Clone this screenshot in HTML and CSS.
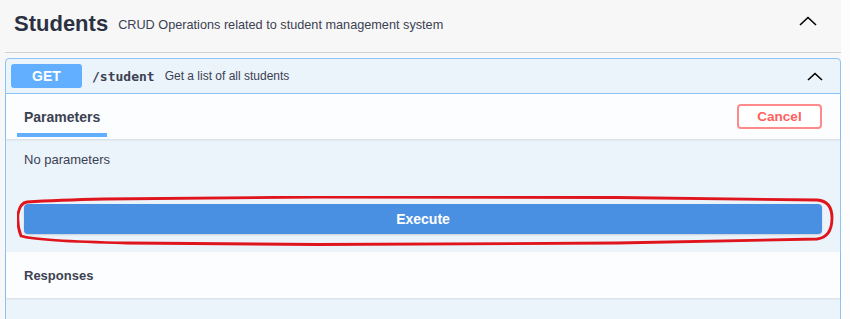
FILE: index.html
```html
<!DOCTYPE html>
<html>
<head>
<meta charset="utf-8">
<link rel="stylesheet" href="styles.css">
</head>
<body>
<div class="wrap">
  <div class="tag-header">
    <h3 class="tag-title">Students</h3>
    <span class="tag-desc">CRUD Operations related to student management system</span>
    <svg class="chev chev-top" width="18" height="10" viewBox="0 0 18 10"><polyline points="1,9 9,1.5 17,9" fill="none" stroke="#000" stroke-width="1.6"/></svg>
  </div>
  <div class="opblock">
    <div class="summary">
      <span class="method">GET</span>
      <span class="path">/student</span>
      <span class="summary-desc">Get a list of all students</span>
      <svg class="chev chev-op" width="16" height="9" viewBox="0 0 16 9"><polyline points="1,8 8,1.5 15,8" fill="none" stroke="#000" stroke-width="1.6"/></svg>
    </div>
    <div class="section-header">
      <div class="tab">Parameters</div>
      <button class="cancel">Cancel</button>
    </div>
    <div class="params-body">
      <div class="no-params">No parameters</div>
      <div class="execute-wrap">
        <button class="execute">Execute</button>
        <svg class="annot" width="820" height="52" viewBox="0 0 820 52"><path d="M88 3 L300 1 L600 1.5 L800 4 Q815 5 815 22 Q815 41 800 43 L600 47 L300 48.5 L110 47 Q20 45 4 40 Q0 30 1 18 Q3 7 10 6 Q40 4 88 3 Z" fill="none" stroke="#e0141c" stroke-width="2.8"/></svg>
      </div>
    </div>
    <div class="section-header responses">
      <div class="resp-title">Responses</div>
    </div>
    <div class="resp-body"></div>
  </div>
</div>
</body>
</html>
```
FILE: styles.css
```css
html, body {
  margin: 0;
  padding: 0;
  background: #fdfdfd;
  font-family: "Liberation Sans", Arial, sans-serif;
  color: #3b4151;
}
.wrap {
  width: 841px;
  height: 319px;
  box-sizing: border-box;
  padding-left: 5px;
  background: #f7f7f7;
  overflow: hidden;
}
.tag-header {
  display: flex;
  align-items: center;
  height: 53px;
  border-bottom: 1px solid #cfd1d6;
  padding-left: 9px;
  box-sizing: border-box;
}
.tag-title {
  margin: 0;
  font-size: 22px;
  font-weight: bold;
  color: #2b3142;
  position: relative;
  top: -2px;
}
.tag-desc {
  margin-left: 10px;
  font-size: 12.7px;
  color: #3b4151;
  position: relative;
  top: -1px;
}
.chev { display: block; }
.chev-top {
  margin-left: auto;
  margin-right: 24px;
  position: relative;
  top: -5px;
}
.opblock {
  margin-top: 5px;
  border: 1px solid #8cc3fa;
  border-radius: 4px;
  background: #ebf3fb;
  height: 280px;
  box-sizing: border-box;
}
.summary {
  display: flex;
  align-items: center;
  padding: 5px;
  border-bottom: 1px solid #8cc3fa;
}
.method {
  width: 71px;
  height: 24px;
  line-height: 24px;
  text-align: center;
  background: #61affe;
  color: #fff;
  font-weight: bold;
  font-size: 14px;
  border-radius: 3px;
}
.path {
  margin-left: 10px;
  font-family: "DejaVu Sans Mono", monospace;
  font-weight: bold;
  font-size: 13px;
  color: #3b4151;
}
.summary-desc {
  margin-left: 10px;
  font-size: 12px;
  color: #3b4151;
}
.chev-op {
  margin-left: auto;
  margin-right: 12px;
}
.section-header {
  display: flex;
  align-items: center;
  height: 45px;
  background: #fcfdfe;
  box-shadow: 0 1px 2px rgba(0,0,0,0.1);
  padding: 0 18px 0 11px;
  position: relative;
}
.tab {
  align-self: stretch;
  display: flex;
  align-items: center;
  padding: 0 7px;
  font-size: 14px;
  font-weight: bold;
  color: #3b4151;
  position: relative;
}
.tab::after {
  content: "";
  position: absolute;
  left: 0;
  right: 0;
  bottom: 2px;
  height: 4px;
  background: #61affe;
}
.cancel {
  margin-left: auto;
  width: 85px;
  height: 25px;
  border: 2px solid #ff8a8a;
  border-radius: 4px;
  background: #fff;
  color: #ff6060;
  font-family: "Liberation Sans", Arial, sans-serif;
  font-weight: bold;
  font-size: 13.5px;
  padding: 0;
}
.params-body {
  padding: 13px 18px 18px 18px;
}
.no-params {
  font-size: 13px;
  line-height: 16px;
  color: #3b4151;
}
.execute-wrap {
  position: relative;
  margin-top: 36px;
}
.execute {
  display: block;
  width: 100%;
  height: 30px;
  border: none;
  border-radius: 4px;
  background: #4990e2;
  color: #fff;
  font-family: "Liberation Sans", Arial, sans-serif;
  font-weight: bold;
  font-size: 14px;
  box-shadow: 0 1px 2px rgba(0,0,0,0.15);
}
.annot {
  position: absolute;
  left: -7px;
  top: -8px;
  pointer-events: none;
}
.responses {
  height: 46px;
}
.resp-title {
  padding-left: 7px;
  font-size: 13px;
  font-weight: bold;
  color: #3b4151;
}
```
